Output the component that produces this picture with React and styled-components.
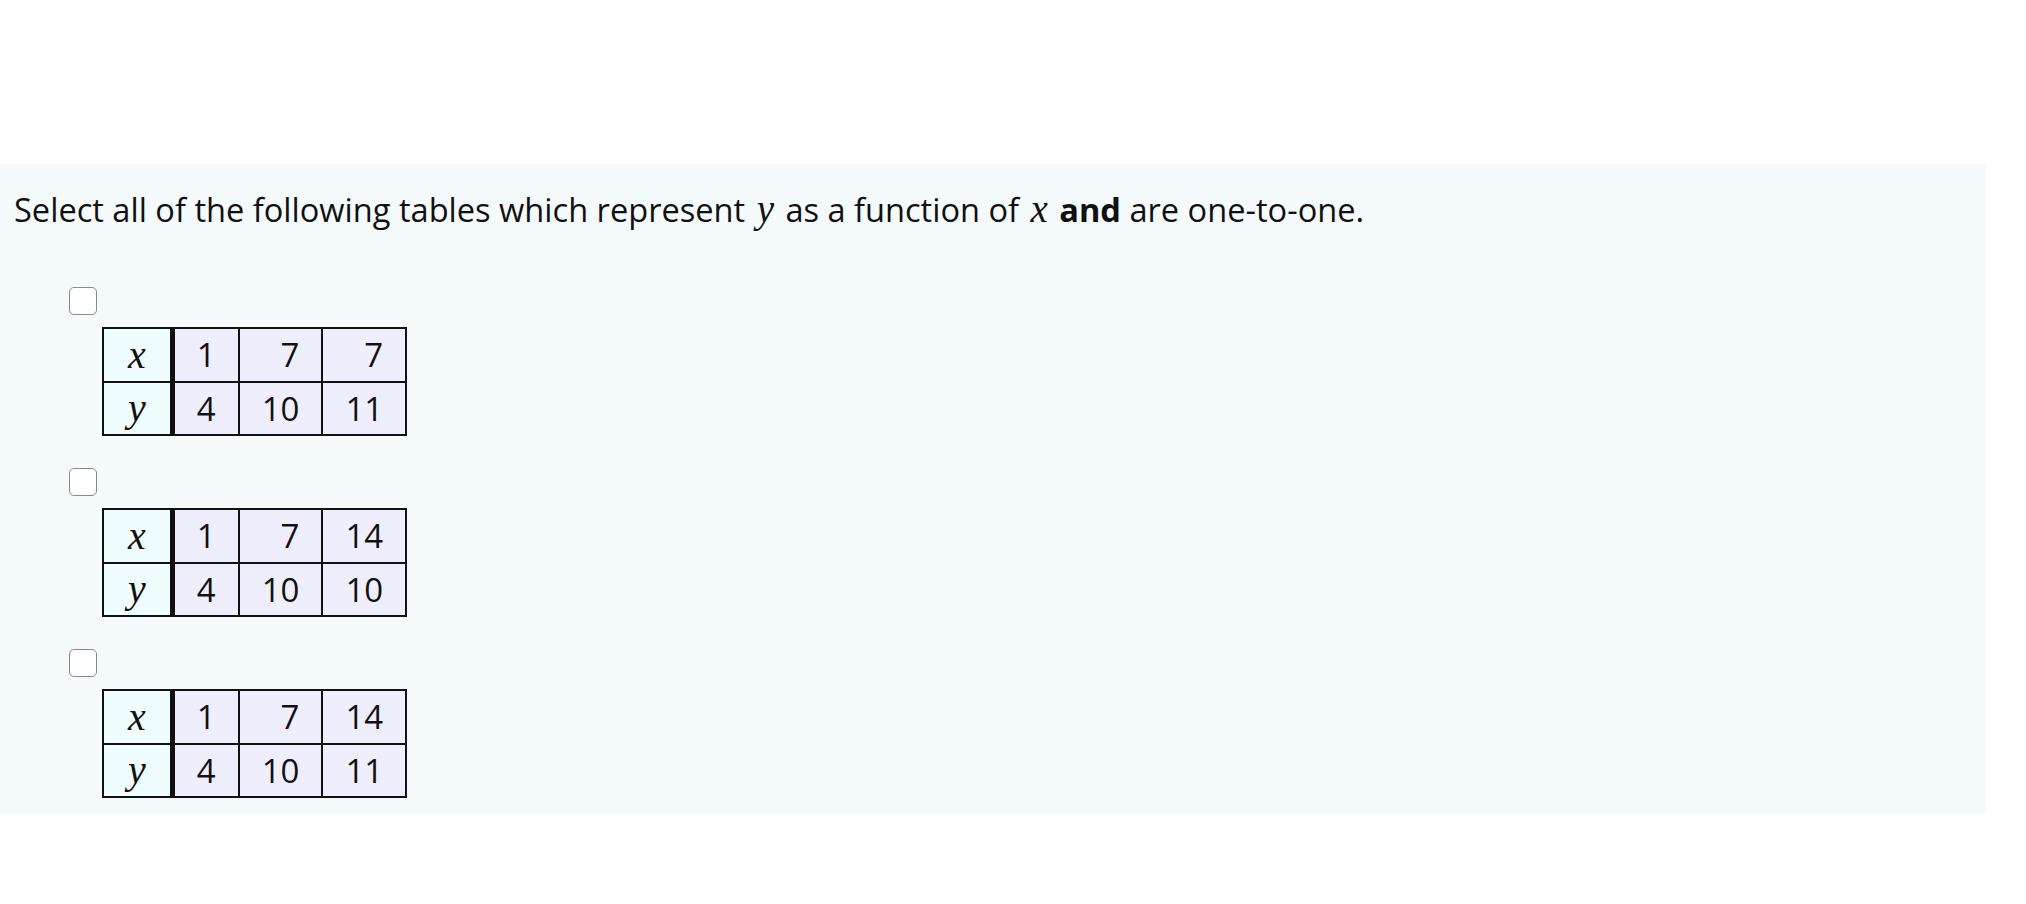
import React from "react";
import styled, { createGlobalStyle } from "styled-components";

const GlobalStyle = createGlobalStyle`
  html, body { margin: 0; padding: 0; background: #ffffff; }
  body { font-family: "Open Sans", "Noto Sans", sans-serif; color: #111; }
`;

const Page = styled.div`
  padding-top: 164px;
  padding-right: 40px;
`;

const Panel = styled.section`
  background: #f5fafd;
  padding: 22px 0 16px 14px;
`;

const Prompt = styled.p`
  margin: 0;
  font-size: 32.6px;
  line-height: 48px;
  color: #111;
`;

const MathVar = styled.span`
  font-family: "Liberation Serif", "DejaVu Serif", serif;
  font-style: italic;
  font-size: 39px;
  line-height: 1;
  padding: 0 3px;
`;

const Strong = styled.strong`
  font-weight: 700;
`;

const OptionList = styled.div`
  display: flex;
  flex-direction: column;
  gap: 32px;
  margin-top: 53px;
  padding-left: 55px;
`;

const Option = styled.label`
  display: flex;
  flex-direction: column;
  align-items: flex-start;
  gap: 12px;
`;

const Box = styled.input.attrs({ type: "checkbox" })`
  appearance: none;
  margin: 0;
  width: 28px;
  height: 28px;
  box-sizing: border-box;
  border: 1.5px solid #8a8a8a;
  border-radius: 5px;
  background: #ffffff;
`;

const Table = styled.table`
  margin-left: 33px;
  border-collapse: collapse;
  border: 2px solid #111;
  font-size: 33px;
`;

const Cell = styled.td`
  height: 51.5px;
  padding: 0 22px;
  border: 2px solid #111;
  text-align: right;
  background: #efeefc;
  line-height: 1;
`;

const HeadCell = styled(Cell)`
  text-align: center;
  background: #f0fdfe;
  border-right: 5px solid #111;
  padding: 0 24px;
`;

const Var = styled.span`
  font-family: "Liberation Serif", "DejaVu Serif", serif;
  font-style: italic;
  font-size: 40px;
`;

const tables = [
  { xs: [1, 7, 7], ys: [4, 10, 11] },
  { xs: [1, 7, 14], ys: [4, 10, 10] },
  { xs: [1, 7, 14], ys: [4, 10, 11] },
];

function ValueTable({ xs, ys }) {
  return (
    <Table>
      <tbody>
        <tr>
          <HeadCell><Var>x</Var></HeadCell>
          {xs.map((v, i) => <Cell key={i}>{v}</Cell>)}
        </tr>
        <tr>
          <HeadCell><Var>y</Var></HeadCell>
          {ys.map((v, i) => <Cell key={i}>{v}</Cell>)}
        </tr>
      </tbody>
    </Table>
  );
}

export default function App() {
  return (
    <>
      <GlobalStyle />
      <Page>
        <Panel>
          <Prompt>
            Select all of the following tables which represent <MathVar>y</MathVar> as a function of <MathVar>x</MathVar> <Strong>and</Strong> are one-to-one.
          </Prompt>
          <OptionList>
            {tables.map((t, i) => (
              <Option key={i}>
                <Box />
                <ValueTable xs={t.xs} ys={t.ys} />
              </Option>
            ))}
          </OptionList>
        </Panel>
      </Page>
    </>
  );
}
